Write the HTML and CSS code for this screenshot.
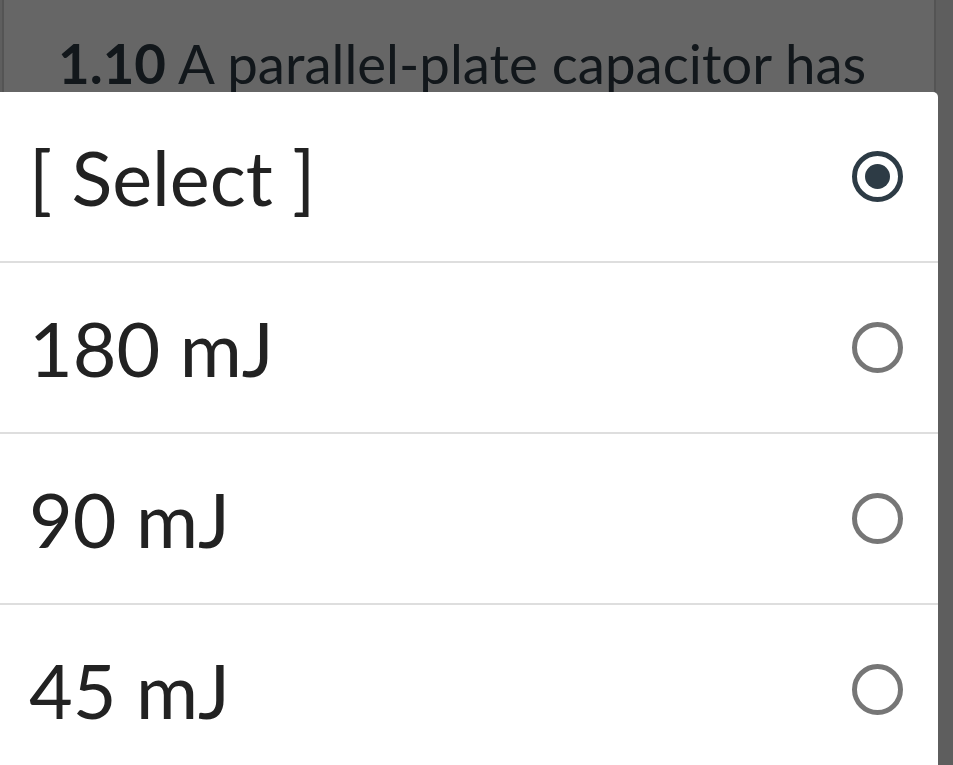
FILE: index.html
```html
<!DOCTYPE html>
<html lang="en">

<head>
  <meta charset="UTF-8">
  <meta name="viewport" content="width=device-width, initial-scale=1.0">
  <title>Question 1.10</title>
  <link rel="stylesheet" href="styles.css">
</head>

<body>
  <div class="page">
    <div class="question">
      <p class="question-text"><strong>1.10</strong> A parallel-plate capacitor has</p>
    </div>
  </div>

  <!-- fundo escuro por cima da pergunta -->
  <div class="overlay"></div>

  <!-- lista de opções -->
  <div class="sheet">
    <div class="option selected">
      <span class="option-label">[ Select ]</span>
      <span class="radio"></span>
    </div>
    <div class="option">
      <span class="option-label">180 mJ</span>
      <span class="radio"></span>
    </div>
    <div class="option">
      <span class="option-label">90 mJ</span>
      <span class="radio"></span>
    </div>
    <div class="option">
      <span class="option-label">45 mJ</span>
      <span class="radio"></span>
    </div>
  </div>
</body>

</html>
```

FILE: styles.css
```css
body {
  margin: 0;
  padding: 0;
  background-color: #ebebeb;
  font-family: Lato, "Open Sans", sans-serif;
  overflow: hidden;
}

.page {
  width: 936px;
  height: 765px;
}

.question {
  margin-left: 2px;
  height: 100%;
  background-color: white;
  border-left: 2px solid #d2d2d2;
  border-right: 2px solid #d2d2d2;
  box-sizing: border-box;
}

.question-text {
  margin: 0;
  padding: 27px 0 0 54px;
  font-size: 54.6px;
  line-height: 72px;
  color: #2d3b45;
}

.question-text strong {
  font-weight: 700;
}

.overlay {
  position: fixed;
  top: 0;
  left: 0;
  right: 0;
  bottom: 0;
  background-color: rgba(0, 0, 0, 0.6);
}

.sheet {
  position: fixed;
  top: 92px;
  left: 0;
  width: 938px;
  bottom: 0;
  background-color: white;
  border-top-right-radius: 5px;
}

.option {
  display: flex;
  align-items: center;
  justify-content: space-between;
  height: 169px;
  padding: 0 35px 0 29px;
  border-bottom: 2px solid #dedede;
}

.option-label {
  font-size: 75.5px;
  color: #222;
}

.radio {
  width: 41px;
  height: 41px;
  border: 5px solid #767676;
  border-radius: 50%;
  position: relative;
}

.option.selected .radio {
  border-color: #2d3b45;
}

.option.selected .radio::after {
  content: "";
  position: absolute;
  top: 8px;
  left: 8px;
  width: 25px;
  height: 25px;
  border-radius: 50%;
  background-color: #2d3b45;
}
```
